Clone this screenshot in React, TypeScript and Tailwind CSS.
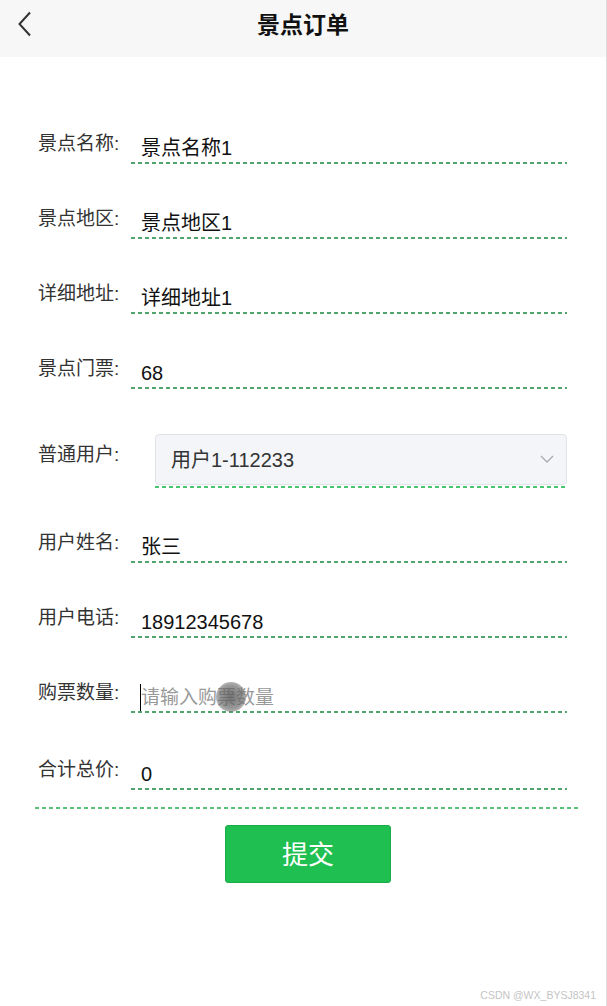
import React from 'react';

const FONT = "font-['Liberation_Sans','Noto_Sans_CJK_SC',sans-serif]";

const DashLine: React.FC<{ className?: string }> = ({ className }) => (
  <div
    className={`h-[2px] bg-[repeating-linear-gradient(90deg,#4fa56c_0_4px,transparent_4px_7px)] ${className ?? ''}`}
  />
);

const Row: React.FC<{ label: string; height?: string; children: React.ReactNode }> = ({
  label,
  height = 'h-[75px]',
  children,
}) => (
  <div className={`flex items-end ${height}`}>
    <div className="w-[93px] shrink-0 pb-[8px] text-[19px] leading-[24px] text-[#333]">{label}</div>
    <div className="flex-1">{children}</div>
  </div>
);

const TextField: React.FC<{ value?: string; placeholder?: string; focused?: boolean }> = ({
  value,
  placeholder,
  focused,
}) => (
  <div className="relative">
    <input
      readOnly
      value={value ?? ''}
      placeholder={placeholder}
      className={`block h-[28px] w-full bg-transparent pl-[10px] text-[20px] leading-[28px] text-[#111] outline-none placeholder:text-[#999] placeholder:text-[19px] ${FONT}`}
    />
    {focused && (
      <>
        {/* caret */}
        <div className="absolute left-[9px] top-[1px] h-[27px] w-px bg-black" />
        {/* touch indicator */}
        <div className="absolute left-[85px] top-[-1px] h-[30px] w-[30px] rounded-full bg-[radial-gradient(circle,rgba(90,90,90,0.85)_0,rgba(110,110,110,0.7)_55%,rgba(150,150,150,0.2)_100%)]" />
      </>
    )}
    <DashLine />
  </div>
);

export default function App() {
  return (
    <div className={`flex h-[1006px] w-full flex-col border-r border-[#dcdcdc] bg-white ${FONT}`}>
      {/* header */}
      <div className="relative flex h-[57px] shrink-0 items-start justify-center bg-[#f7f7f7] pt-[10px]">
        <button className="absolute left-[17px] top-[11px]" aria-label="back">
          <svg width="15" height="26" viewBox="0 0 15 26" fill="none">
            <path d="M13 1.5 L2.5 13 L13 24.5" stroke="#333" strokeWidth="2" />
          </svg>
        </button>
        <h1 className="text-[23px] font-bold leading-[30px] text-[#111]">景点订单</h1>
      </div>

      {/* form */}
      <div className="pl-[38px] pr-[39px] pt-[32px]">
        <Row label="景点名称:">
          <TextField value="景点名称1" />
        </Row>
        <Row label="景点地区:">
          <TextField value="景点地区1" />
        </Row>
        <Row label="详细地址:">
          <TextField value="详细地址1" />
        </Row>
        <Row label="景点门票:">
          <TextField value="68" />
        </Row>

        <div className="flex h-[99px] items-end">
          <div className="w-[93px] shrink-0 pb-[21px] text-[19px] leading-[24px] text-[#333]">普通用户:</div>
          <div className="ml-[24px] flex-1">
            <div className="flex h-[51px] items-center justify-between rounded-[4px] border border-[#e2e3e6] bg-[#f4f5f8] pl-[15px] pr-[12px]">
              <span className="text-[20px] text-[#333]">用户1-112233</span>
              <svg width="14" height="9" viewBox="0 0 14 9" fill="none">
                <path d="M1 1 L7 7 L13 1" stroke="#a8abb2" strokeWidth="1.3" />
              </svg>
            </div>
            <DashLine className="mt-[1px] bg-[repeating-linear-gradient(90deg,#46c46f_0_4px,transparent_4px_7px)]" />
          </div>
        </div>

        <Row label="用户姓名:">
          <TextField value="张三" />
        </Row>
        <Row label="用户电话:">
          <TextField value="18912345678" />
        </Row>
        <Row label="购票数量:">
          <TextField placeholder="请输入购票数量" focused />
        </Row>
        <Row label="合计总价:" height="h-[77px]">
          <TextField value="0" />
        </Row>

        <DashLine className="-ml-[3px] -mr-[12px] mt-[17px] bg-[repeating-linear-gradient(90deg,#5cc27a_0_4px,transparent_4px_7px)]" />

        <button className="ml-[187px] mt-[16px] flex h-[58px] w-[166px] items-center justify-center rounded-[3px] border border-[#1aac48] bg-[#1fbf51] pt-[3px] text-[26px] text-white">
          提交
        </button>
      </div>

      {/* watermark */}
      <div className="mt-auto pb-[4px] pr-[10px] text-right text-[10.5px] leading-[14px] text-[#c4c4c4]">
        CSDN @WX_BYSJ8341
      </div>
    </div>
  );
}
